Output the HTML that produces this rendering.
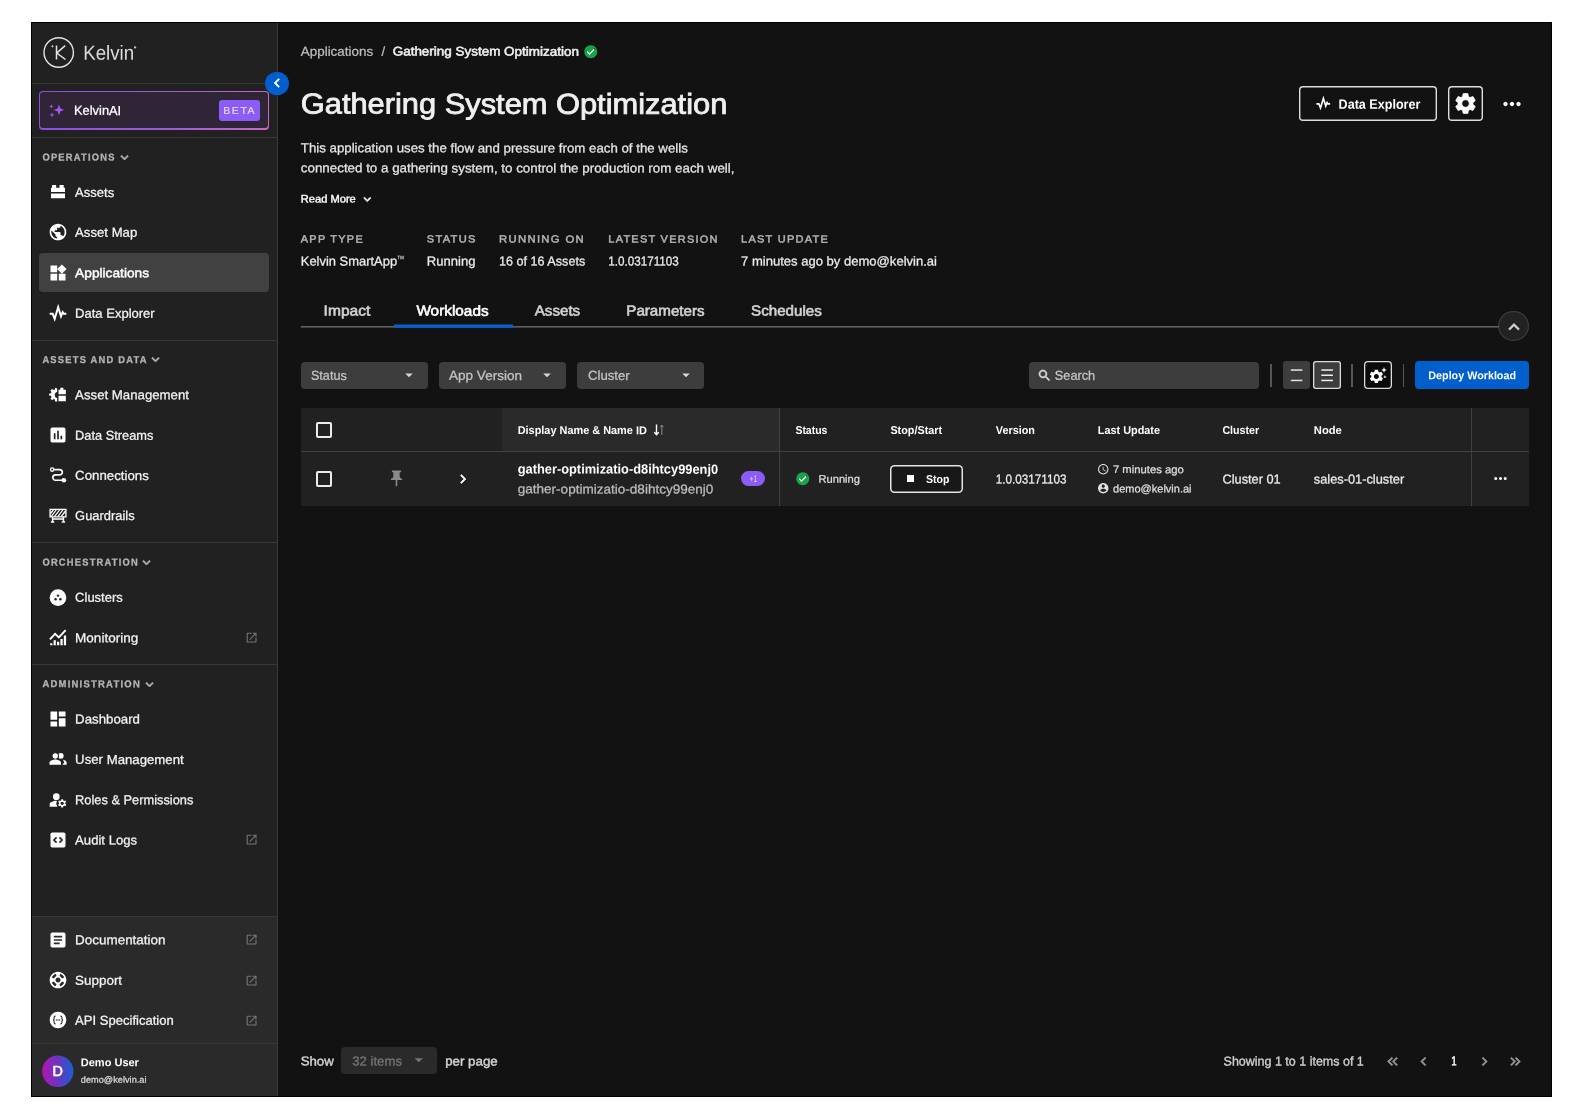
<!DOCTYPE html><html><head><meta charset="utf-8"><title>Kelvin</title><style>
html,body{margin:0;padding:0;background:#fff;width:1584px;height:1120px;overflow:hidden}
body{font-family:"Liberation Sans", sans-serif;position:relative}
#app{position:absolute;left:0;top:0;width:1584px;height:1120px;will-change:transform}
#app div,#app svg,#app span{position:absolute;display:block}
#app span{white-space:nowrap;line-height:1;transform-origin:0 50%}
</style></head><body><div id="app">
<div style="left:31px;top:22px;width:1521px;height:1075px;background:#000;"></div>
<div style="left:32px;top:23px;width:1519px;height:1073px;background:#121212;"></div>
<div style="left:32px;top:23px;width:246px;height:1073px;background:#212121;"></div>
<div style="left:32px;top:916px;width:246px;height:180px;background:#2a2a2a;"></div>
<div style="left:32px;top:82.5px;width:245px;height:1px;background:#383838;"></div>
<div style="left:32px;top:137px;width:245px;height:1px;background:#383838;"></div>
<div style="left:32px;top:340px;width:245px;height:1px;background:#383838;"></div>
<div style="left:32px;top:542px;width:245px;height:1px;background:#383838;"></div>
<div style="left:32px;top:664px;width:245px;height:1px;background:#383838;"></div>
<div style="left:32px;top:916px;width:245px;height:1px;background:#383838;"></div>
<div style="left:32px;top:1043px;width:245px;height:1px;background:#383838;"></div>
<div style="left:277px;top:23px;width:1px;height:1073px;background:#393939;"></div>
<div style="left:265.2px;top:71.6px;width:23.4px;height:23.4px;background:#005fcc;border-radius:50%"></div>
<div style="left:38.6px;top:90.9px;width:230.6px;height:38.9px;background:linear-gradient(90deg,#8b4fe0,#a25bd6 60%,#c86bc0);border-radius:4px"></div>
<div style="left:40.0px;top:92.3px;width:227.8px;height:36.1px;background:#2f2536;border-radius:3px"></div>
<div style="left:219.2px;top:100px;width:40.6px;height:20.8px;background:#8b5cf6;border-radius:3px"></div>
<div style="left:38.6px;top:253.3px;width:230.6px;height:38.3px;background:#414141;border-radius:4px"></div>
<div style="left:586.5px;top:47.8px;width:8px;height:8px;background:#fff;border-radius:50%"></div>
<div style="left:1498.4px;top:311.3px;width:30.2px;height:30.2px;background:#222;border-radius:50%;box-shadow:inset 0 0 0 1.200px #3a3a3a"></div>
<div style="left:1299.4px;top:86px;width:137.5px;height:35px;background:#121212;border-radius:4px;box-shadow:inset 0 0 0 1.400px #dedede"></div>
<div style="left:1448.3px;top:86px;width:34.7px;height:35px;background:#121212;border-radius:4px;box-shadow:inset 0 0 0 1.400px #dedede"></div>
<div style="left:300.8px;top:362px;width:126.9px;height:26.8px;background:#3d3d3d;border-radius:4px"></div>
<div style="left:439.1px;top:362px;width:126.9px;height:26.8px;background:#3d3d3d;border-radius:4px"></div>
<div style="left:577px;top:362px;width:126.9px;height:26.8px;background:#3d3d3d;border-radius:4px"></div>
<div style="left:1028.6px;top:362px;width:230.4px;height:26.8px;background:#3d3d3d;border-radius:4px"></div>
<div style="left:1270.3px;top:363.6px;width:1.6px;height:23.2px;background:#565656;"></div>
<div style="left:1351.2px;top:363.6px;width:1.6px;height:23.2px;background:#565656;"></div>
<div style="left:1402.9px;top:363.6px;width:1.6px;height:23.2px;background:#565656;"></div>
<div style="left:1283px;top:361.4px;width:27.2px;height:27.4px;background:#3d3d3d;border-radius:3px"></div>
<div style="left:1313.3px;top:361.4px;width:27.6px;height:27.4px;background:#3d3d3d;border-radius:3px;box-shadow:inset 0 0 0 1.300px #dcdcdc"></div>
<div style="left:1364.3px;top:361.4px;width:27.6px;height:27.4px;background:#0a0a0a;border-radius:4px;box-shadow:inset 0 0 0 1.300px #dcdcdc"></div>
<div style="left:1415.3px;top:361.4px;width:113.9px;height:27.4px;background:#005fcc;border-radius:4px"></div>
<div style="left:300.8px;top:407.7px;width:1228.4px;height:98.2px;background:#212121;"></div>
<div style="left:502px;top:408px;width:277.5px;height:43px;background:#2a2a2a;"></div>
<div style="left:300.8px;top:451px;width:1228.4px;height:1px;background:#414141;"></div>
<div style="left:779px;top:407.7px;width:1.2px;height:98.2px;background:#404040;"></div>
<div style="left:1471px;top:407.7px;width:1.2px;height:98.2px;background:#404040;"></div>
<div style="left:315.7px;top:421.9px;width:16.2px;height:16.2px;background:transparent;border-radius:2px;box-shadow:inset 0 0 0 2px #ececec"></div>
<div style="left:315.7px;top:470.79999999999995px;width:16.2px;height:16.2px;background:transparent;border-radius:2px;box-shadow:inset 0 0 0 2px #ececec"></div>
<div style="left:741.4px;top:471.0px;width:23.4px;height:15.2px;background:#8b5cf6;border-radius:8px"></div>
<div style="left:799px;top:475px;width:8px;height:8px;background:#fff;border-radius:50%"></div>
<div style="left:890.3px;top:464.9px;width:72.3px;height:28px;background:#181818;border-radius:4.500px;box-shadow:inset 0 0 0 1.500px #e4e4e4"></div>
<div style="left:907.2px;top:475.4px;width:7px;height:7px;background:#fff;"></div>
<div style="left:341.1px;top:1047px;width:96px;height:26.8px;background:#2a2a2a;border-radius:4px"></div>
<svg style="left:42px;top:36px" width="34" height="34" viewBox="0 0 34 34" fill="none" stroke="#e4e4e4"><circle cx="16.7" cy="16.5" r="14.7" stroke-width="1.4"/><path d="M14.5 9.4v14.100M23.200 9.600l-8.400 7.400 8.700 6.500" stroke-width="1.500"/><circle cx="10.5" cy="10.300" r=".600" stroke-width="1" fill="#e4e4e4"/></svg>
<svg style="left:132px;top:44px" width="6" height="6" viewBox="0 0 6 6"><circle cx="3.1" cy="3.400" r="1.150" fill="#c4c4c4"/></svg>
<svg style="left:267.6px;top:74.3px;" width="18" height="18" viewBox="0 0 24 24" fill="#fff"><path d="M15.41 7.41L14 6l-6 6 6 6 1.41-1.41L10.83 12z" stroke="#fff" stroke-width=".8"/></svg>
<svg style="left:48px;top:103px" width="18" height="15" viewBox="0 0 18 15" fill="#a855f7"><path d="M11 1.6l1.4 3.9 3.9 1.4-3.9 1.4L11 12.2 9.6 8.3 5.7 6.9l3.9-1.4z"/><path d="M3.4 1.2l.6 1.6 1.6.6-1.6.6-.6 1.6-.6-1.6-1.6-.6 1.6-.6z"/><path d="M4 9.4l.7 1.8 1.8.7-1.8.7L4 14.4l-.7-1.8-1.8-.7 1.8-.7z"/></svg>
<svg style="left:116.9px;top:149.8px;" width="15" height="15" viewBox="0 0 24 24" fill="#b4b4b4"><path d="M16.59 8.59L12 13.17 7.41 8.59 6 10l6 6 6-6z" stroke="#b4b4b4" stroke-width="1.2"/></svg>
<svg style="left:148.0px;top:352.3px;" width="15" height="15" viewBox="0 0 24 24" fill="#b4b4b4"><path d="M16.59 8.59L12 13.17 7.41 8.59 6 10l6 6 6-6z" stroke="#b4b4b4" stroke-width="1.2"/></svg>
<svg style="left:139.3px;top:554.8px;" width="15" height="15" viewBox="0 0 24 24" fill="#b4b4b4"><path d="M16.59 8.59L12 13.17 7.41 8.59 6 10l6 6 6-6z" stroke="#b4b4b4" stroke-width="1.2"/></svg>
<svg style="left:141.5px;top:676.5px;" width="15" height="15" viewBox="0 0 24 24" fill="#b4b4b4"><path d="M16.59 8.59L12 13.17 7.41 8.59 6 10l6 6 6-6z" stroke="#b4b4b4" stroke-width="1.2"/></svg>
<svg style="left:48px;top:182.4px;" width="20" height="20" viewBox="0 0 24 24" fill="#fff"><path d="M3.6 6.900h1.300V3.600h4.900v3.300h4V3.600h5v3.300h1.600v5.200H3.600zM3.600 13.800h16.800v5.800H3.600z" /></svg>
<svg style="left:48px;top:222.2px;" width="20" height="20" viewBox="0 0 24 24" fill="#fff"><path d="M12 2C6.48 2 2 6.48 2 12s4.48 10 10 10 10-4.48 10-10S17.52 2 12 2zm-1 17.93c-3.95-.49-7-3.85-7-7.93 0-.62.08-1.21.21-1.79L9 15v1c0 1.1.9 2 2 2v1.93zm6.9-2.54c-.26-.81-1-1.39-1.9-1.39h-1v-3c0-.55-.45-1-1-1H8v-2h2c.55 0 1-.45 1-1V7h2c1.1 0 2-.9 2-2v-.41c2.93 1.19 5 4.06 5 7.41 0 2.08-.8 3.97-2.1 5.39z" /></svg>
<svg style="left:48px;top:262.8px;" width="20" height="20" viewBox="0 0 24 24" fill="#fff"><path d="M13 13v8h8v-8h-8zM3 21h8v-8H3v8zM3 3v8h8V3H3zm13.66-1.31L11 7.34 16.66 13l5.66-5.66-5.66-5.65z" /></svg>
<svg style="left:48px;top:303.2px;" width="20" height="20" viewBox="0 0 24 24" fill="#fff"><path d="M2 12.800h3.600l2.400 6.200 4.200-14 3.400 11 2-5 1.200 1.800H22" fill="none" stroke="#fff" stroke-width="2.400" stroke-linejoin="miter"/></svg>
<svg style="left:48px;top:384.8px;" width="20" height="20" viewBox="0 0 24 24" fill="#fff"><path d="M12.6 5.6h2.2V3.4h3.6v2.2h3V11h-8.8zM12.6 13h8.8v6.4h-8.8z"/><path d="M11 4.2v4.1c-1.6 0-2.9 1.6-2.9 3.7s1.3 3.7 2.9 3.7v4.1H8.6l-.5-2.3-1.3-.6-2 1.3-1.9-1.9 1.3-2-.6-1.3-2.300-.5V10.500l2.300-.5.600-1.300-1.300-2L4.800 4.800l2 1.300 1.300-.600.500-2.300z"/></svg>
<svg style="left:48px;top:425.2px;" width="20" height="20" viewBox="0 0 24 24" fill="#fff"><path d="M19 3H5c-1.1 0-2 .9-2 2v14c0 1.1.9 2 2 2h14c1.1 0 2-.9 2-2V5c0-1.1-.9-2-2-2zM9 17H7v-7h2v7zm4 0h-2V7h2v10zm4 0h-2v-4h2v4z" /></svg>
<svg style="left:48px;top:465.4px;" width="20" height="20" viewBox="0 0 24 24" fill="#fff"><circle cx="5" cy="5.500" r="2" fill="none" stroke="#fff" stroke-width="1.600"/><path d="M7.500 5.500h6.500a3.200 3.200 0 0 1 0 6.400H9a3.200 3.200 0 0 0 0 6.400h8" fill="none" stroke="#fff" stroke-width="2"/><circle cx="19" cy="18.300" r="2.800"/></svg>
<svg style="left:48px;top:505.6px;" width="20" height="20" viewBox="0 0 24 24" fill="#fff"><path d="M2.500 4h19v9h-19z" fill="none" stroke="#fff" stroke-width="1.600"/><path d="M4 12.500l6-8M8 12.500l6-8M12 12.500l6-8M16 12.500l5-6.500M3 9l3.500-4.500" stroke="#fff" stroke-width="1.500" fill="none"/><path d="M5.500 13v6M18.500 13v6M3.500 19.200h4M16.500 19.200h4M5.500 15.500h13" stroke="#fff" stroke-width="1.800" fill="none"/></svg>
<svg style="left:48px;top:587.3px;" width="20" height="20" viewBox="0 0 24 24" fill="#fff"><circle cx="12" cy="12.700" r="10"/><circle cx="12" cy="10.300" r="1.450" fill="#212121"/><circle cx="9.100" cy="14.700" r="1.450" fill="#212121"/><circle cx="14.900" cy="14.700" r="1.450" fill="#212121"/></svg>
<svg style="left:48px;top:627.7px;" width="20" height="20" viewBox="0 0 24 24" fill="#fff"><path d="M2.300 13.600l6.200-6.600 4.500 4.200 8.200-8.600" fill="none" stroke="#fff" stroke-width="2.300"/><path d="M2.600 18.200h2.700v2.600H2.600zM6.700 14.800h2.700v6H6.700zM10.800 16.600h2.700v4.200h-2.700zM14.900 13.200h2.700v7.600h-2.700zM19 9h2.700v11.800H19z"/></svg>
<svg style="left:245px;top:631.1px;" width="13.2" height="13.2" viewBox="0 0 24 24" fill="#767676"><path d="M19 19H5V5h7V3H5c-1.11 0-2 .9-2 2v14c0 1.1.89 2 2 2h14c1.1 0 2-.9 2-2v-7h-2v7zM14 3v2h3.59l-9.83 9.83 1.41 1.41L19 6.41V10h2V3h-7z" /></svg>
<svg style="left:48px;top:709.1px;" width="20" height="20" viewBox="0 0 24 24" fill="#fff"><path d="M3 13h8V3H3v10zm0 8h8v-6H3v6zm10 0h8V11h-8v10zm0-18v6h8V3h-8z" /></svg>
<svg style="left:48px;top:749.4px;" width="20" height="20" viewBox="0 0 24 24" fill="#fff"><circle cx="15.300" cy="8.200" r="3.500"/><path d="M17.300 18.800h5.100v-2.300c0-2.100-2.700-3.400-5.200-3.800 1.300.900 2 2.200 2 3.800z"/><circle cx="8.700" cy="8.400" r="3.900" stroke="#212121" stroke-width="1.300"/><path d="M1.800 18.800v-2.300c0-2.600 4.600-3.900 6.900-3.900s6.900 1.300 6.900 3.900v2.300z"/></svg>
<svg style="left:48px;top:789.7px;" width="20" height="20" viewBox="0 0 24 24" fill="#fff"><circle cx="10" cy="8" r="4"/><path d="M10.670 13.020C10.450 13.010 10.230 13 10 13c-2.420 0-4.680.670-6.610 1.820C2.510 15.340 2 16.320 2 17.350V20h9.260a6.963 6.963 0 0 1-.590-6.980z"/><path d="M20.750 16c0-.220-.030-.420-.060-.630l1.140-1.010-1-1.730-1.450.490c-.320-.270-.680-.480-1.080-.630L18 11h-2l-.300 1.490c-.400.150-.760.360-1.080.630l-1.450-.490-1 1.730 1.140 1.010c-.030.210-.060.410-.060.630s.030.420.060.630l-1.140 1.010 1 1.730 1.450-.490c.320.270.680.480 1.080.630L16 21h2l.300-1.490c.400-.150.760-.360 1.080-.630l1.450.490 1-1.730-1.140-1.010c.030-.210.060-.410.060-.630zM17 18c-1.100 0-2-.900-2-2s.900-2 2-2 2 .900 2 2-.900 2-2 2z"/></svg>
<svg style="left:48px;top:830px;" width="20" height="20" viewBox="0 0 24 24" fill="#fff"><path d="M5 3h14a2 2 0 0 1 2 2v14a2 2 0 0 1-2 2H5a2 2 0 0 1-2-2V5a2 2 0 0 1 2-2z"/><path d="M10.300 8.800L7.100 12l3.200 3.200M13.700 8.800l3.200 3.200-3.200 3.200" fill="none" stroke="#212121" stroke-width="1.900"/></svg>
<svg style="left:245px;top:833.4px;" width="13.2" height="13.2" viewBox="0 0 24 24" fill="#767676"><path d="M19 19H5V5h7V3H5c-1.11 0-2 .9-2 2v14c0 1.1.89 2 2 2h14c1.1 0 2-.9 2-2v-7h-2v7zM14 3v2h3.59l-9.83 9.83 1.41 1.41L19 6.41V10h2V3h-7z" /></svg>
<svg style="left:48px;top:929.8px;" width="20" height="20" viewBox="0 0 24 24" fill="#fff"><path d="M19 3H5c-1.100 0-2 .900-2 2v14c0 1.100.900 2 2 2h14c1.100 0 2-.900 2-2V5c0-1.100-.900-2-2-2zm-5 14H7v-2h7v2zm3-4H7v-2h10v2zm0-4H7V7h10v2z" /></svg>
<svg style="left:245px;top:933.1999999999999px;" width="13.2" height="13.2" viewBox="0 0 24 24" fill="#767676"><path d="M19 19H5V5h7V3H5c-1.11 0-2 .9-2 2v14c0 1.1.89 2 2 2h14c1.1 0 2-.9 2-2v-7h-2v7zM14 3v2h3.59l-9.83 9.83 1.41 1.41L19 6.41V10h2V3h-7z" /></svg>
<svg style="left:48px;top:970.3px;" width="20" height="20" viewBox="0 0 24 24" fill="#fff"><path d="M12 2C6.480 2 2 6.480 2 12s4.480 10 10 10 10-4.480 10-10S17.520 2 12 2zm7.460 7.120l-2.780 1.150c-.510-1.360-1.580-2.440-2.950-2.940l1.150-2.780c2.100.800 3.770 2.470 4.580 4.570zM12 15c-1.660 0-3-1.340-3-3s1.340-3 3-3 3 1.340 3 3-1.340 3-3 3zM9.130 4.540l1.170 2.780c-1.380.500-2.470 1.590-2.980 2.970L4.540 9.130c.810-2.110 2.480-3.780 4.590-4.590zM4.540 14.870l2.780-1.150c.510 1.380 1.590 2.460 2.970 2.960l-1.170 2.780c-2.100-.810-3.770-2.480-4.580-4.590zm10.340 4.590l-1.150-2.780c1.370-.510 2.450-1.590 2.950-2.970l2.780 1.170c-.810 2.100-2.480 3.770-4.580 4.580z" /></svg>
<svg style="left:245px;top:973.6999999999999px;" width="13.2" height="13.2" viewBox="0 0 24 24" fill="#767676"><path d="M19 19H5V5h7V3H5c-1.11 0-2 .9-2 2v14c0 1.1.89 2 2 2h14c1.1 0 2-.9 2-2v-7h-2v7zM14 3v2h3.59l-9.83 9.83 1.41 1.41L19 6.41V10h2V3h-7z" /></svg>
<svg style="left:48px;top:1010.2px;" width="20" height="20" viewBox="0 0 24 24" fill="#fff"><circle cx="12" cy="12" r="10"/><path d="M9.300 7.200c-1.600 0-2 .700-2 1.800v1.400c0 .900-.500 1.400-1.300 1.600.800.200 1.300.700 1.300 1.600V15c0 1.100.400 1.800 2 1.800M14.700 7.200c1.600 0 2 .700 2 1.800v1.400c0 .900.500 1.400 1.300 1.600-.800.200-1.300.700-1.300 1.600V15c0 1.100-.400 1.800-2 1.800" fill="none" stroke="#2a2a2a" stroke-width="1.300"/><circle cx="10" cy="12" r=".800" fill="#2a2a2a"/><circle cx="12" cy="12" r=".800" fill="#2a2a2a"/><circle cx="14" cy="12" r=".800" fill="#2a2a2a"/></svg>
<svg style="left:245px;top:1013.6px;" width="13.2" height="13.2" viewBox="0 0 24 24" fill="#767676"><path d="M19 19H5V5h7V3H5c-1.11 0-2 .9-2 2v14c0 1.1.89 2 2 2h14c1.1 0 2-.9 2-2v-7h-2v7zM14 3v2h3.59l-9.83 9.83 1.41 1.41L19 6.41V10h2V3h-7z" /></svg>
<svg style="left:41px;top:1054px" width="34" height="34" viewBox="0 0 34 34"><defs><linearGradient id="ag" x1="0" x2="1" y1="0" y2="0"><stop offset="0" stop-color="#b414b0"/><stop offset=".5" stop-color="#6a35c0"/><stop offset="1" stop-color="#1a5fd0"/></linearGradient></defs><circle cx="16.8" cy="17.300" r="15.700" fill="url(#ag)"/></svg>
<svg style="left:583.1px;top:44.0px;" width="15.6" height="15.6" viewBox="0 0 24 24" fill="#17a34a"><path d="M12 2C6.48 2 2 6.48 2 12s4.48 10 10 10 10-4.48 10-10S17.52 2 12 2zm-2 15l-5-5 1.41-1.41L10 14.17l7.59-7.59L19 8l-9 9z" /></svg>
<svg style="left:359.8px;top:191.6px;" width="14.6" height="14.6" viewBox="0 0 24 24" fill="#fff"><path d="M16.59 8.59L12 13.17 7.41 8.59 6 10l6 6 6-6z" stroke="#fff" stroke-width="1"/></svg>
<svg style="left:300px;top:324px" width="1200" height="5" viewBox="0 0 1200 5"><rect x=".800" y="2.000" width="1198" height="1.600" fill="#606060"/><rect x="94" y=".500" width="119" height="3.300" fill="#0560cf"/></svg>
<svg style="left:1502.5px;top:315.7px;" width="22" height="22" viewBox="0 0 24 24" fill="#d0d0d0"><path d="M12 8l-6 6 1.41 1.41L12 10.83l4.59 4.58L18 14z" stroke="#d0d0d0" stroke-width=".500"/></svg>
<svg style="left:1315.200px;top:94.800px" width="16.500" height="16.500" viewBox="0 0 24 24" fill="none" stroke="#fff" stroke-width="2.400"><path d="M2 12.800h3.600l2.400 6.200 4.200-14 3.400 11 2-5 1.200 1.800H22"/></svg>
<svg style="left:1453.2px;top:91px;" width="25" height="25" viewBox="0 0 24 24" fill="#fff"><path d="M19.14 12.94c.04-.3.06-.61.06-.94 0-.32-.02-.64-.07-.94l2.03-1.58c.18-.14.23-.41.12-.61l-1.92-3.32c-.12-.22-.37-.29-.59-.22l-2.39.96c-.5-.38-1.03-.7-1.62-.94l-.36-2.54c-.04-.24-.24-.41-.48-.41h-3.84c-.24 0-.43.17-.47.41l-.36 2.54c-.59.24-1.13.57-1.62.94l-2.39-.96c-.22-.08-.47 0-.59.22L2.74 8.87c-.12.21-.08.47.12.61l2.03 1.58c-.05.3-.09.63-.09.94s.02.64.07.94l-2.03 1.58c-.18.14-.23.41-.12.61l1.92 3.32c.12.22.37.29.59.22l2.39-.96c.5.38 1.03.7 1.62.94l.36 2.54c.05.24.24.41.48.41h3.84c.24 0 .44-.17.47-.41l.36-2.54c.59-.24 1.13-.56 1.62-.94l2.39.96c.22.08.47 0 .59-.22l1.92-3.32c.12-.22.07-.47-.12-.61l-2.01-1.58zM12 15.6c-1.98 0-3.6-1.62-3.6-3.6s1.620-3.600 3.600-3.600 3.600 1.620 3.600 3.600-1.620 3.600-3.600 3.600z" stroke="#fff" stroke-width=".700"/></svg>
<svg style="left:1498.6px;top:90.8px;" width="26" height="26" viewBox="0 0 24 24" fill="#fff"><path d="M6 10c-1.1 0-2 .9-2 2s.9 2 2 2 2-.9 2-2-.9-2-2-2zm12 0c-1.1 0-2 .9-2 2s.9 2 2 2 2-.9 2-2-.9-2-2-2zm-6 0c-1.1 0-2 .9-2 2s.9 2 2 2 2-.9 2-2-.9-2-2-2z" /></svg>
<svg style="left:400.1px;top:366.2px;" width="18" height="18" viewBox="0 0 24 24" fill="#d8d8d8"><path d="M7 10l5 5 5-5z" /></svg>
<svg style="left:538.4px;top:366.2px;" width="18" height="18" viewBox="0 0 24 24" fill="#d8d8d8"><path d="M7 10l5 5 5-5z" /></svg>
<svg style="left:677px;top:366.2px;" width="18" height="18" viewBox="0 0 24 24" fill="#d8d8d8"><path d="M7 10l5 5 5-5z" /></svg>
<svg style="left:1037.2px;top:367.7px;" width="15" height="15" viewBox="0 0 24 24" fill="#dcdcdc"><path d="M15.5 14h-.79l-.28-.27C15.41 12.59 16 11.11 16 9.5 16 5.91 13.09 3 9.5 3S3 5.91 3 9.5 5.91 16 9.5 16c1.61 0 3.09-.59 4.23-1.57l.27.28v.79l5 4.990L20.490 19l-4.990-5zm-6 0C7.010 14 5 11.990 5 9.500S7.010 5 9.500 5 14 7.010 14 9.500 11.990 14 9.500 14z" stroke="#dcdcdc" stroke-width=".800"/></svg>
<svg style="left:1283px;top:361px" width="28" height="28" viewBox="0 0 28 28" fill="#e4e4e4"><rect x="7.800" y="8.300" width="11.600" height="1.500"/><rect x="7.800" y="18.700" width="11.600" height="1.500"/></svg>
<svg style="left:1313px;top:361px" width="28" height="28" viewBox="0 0 28 28" fill="#f0f0f0"><rect x="8.300" y="8.300" width="11.600" height="1.500"/><rect x="8.300" y="13.500" width="11.600" height="1.500"/><rect x="8.300" y="18.700" width="11.600" height="1.500"/></svg>
<svg style="left:1368.3px;top:368.1px;" width="16.8" height="16.8" viewBox="0 0 24 24" fill="#fff"><path d="M19.14 12.94c.04-.3.06-.61.06-.94 0-.32-.02-.64-.07-.94l2.03-1.58c.18-.14.23-.41.12-.61l-1.92-3.32c-.12-.22-.37-.29-.59-.22l-2.39.96c-.5-.38-1.03-.7-1.62-.94l-.36-2.54c-.04-.24-.24-.41-.48-.41h-3.84c-.24 0-.43.17-.47.41l-.36 2.54c-.59.24-1.13.57-1.62.94l-2.39-.96c-.22-.08-.47 0-.59.22L2.74 8.87c-.12.21-.08.47.12.61l2.03 1.58c-.05.3-.09.63-.09.94s.02.64.07.94l-2.03 1.58c-.18.14-.23.41-.12.61l1.92 3.32c.12.22.37.29.59.22l2.39-.96c.5.38 1.03.7 1.62.94l.36 2.54c.05.24.24.41.48.41h3.84c.24 0 .44-.17.47-.41l.36-2.54c.59-.24 1.13-.56 1.62-.94l2.39.96c.22.08.47 0 .59-.22l1.92-3.32c.12-.22.07-.47-.12-.61l-2.01-1.58zM12 15.6c-1.98 0-3.6-1.62-3.6-3.6s1.620-3.600 3.600-3.600 3.600 1.620 3.600 3.600-1.620 3.600-3.600 3.600z" /></svg>
<svg style="left:1380.600px;top:367.200px" width="6" height="6" viewBox="0 0 10 10" fill="#fff"><path d="M5 0l1.300 3.700L10 5 6.300 6.300 5 10 3.700 6.300 0 5l3.700-1.300z"/></svg>
<svg style="left:1383.400px;top:374.500px" width="3.800" height="3.800" viewBox="0 0 10 10" fill="#fff"><path d="M5 0l1.300 3.700L10 5 6.300 6.300 5 10 3.700 6.300 0 5l3.700-1.300z"/></svg>
<svg style="left:652px;top:423px" width="14" height="14" viewBox="0 0 14 14" fill="none"><path d="M4.500 1.500v10M2.300 9.300l2.200 2.400 2.200-2.400" stroke="#fff" stroke-width="1.400"/><path d="M9.800 12V2.200M8 4.200l1.800-2 1.800 2" stroke="#8a8a8a" stroke-width="1"/></svg>
<svg style="left:387.3px;top:469.4px;" width="19" height="19" viewBox="0 0 24 24" fill="#8a8a8a"><path d="M16 9V4h1c.55 0 1-.45 1-1s-.45-1-1-1H7c-.55 0-1 .45-1 1s.45 1 1 1h1v5c0 1.660-1.340 3-3 3v2h5.970v7l1 1 1-1v-7H19v-2c-1.660 0-3-1.340-3-3z" /></svg>
<svg style="left:454.4px;top:469.9px;" width="18" height="18" viewBox="0 0 24 24" fill="#fff"><path d="M10 6L8.590 7.410 13.170 12l-4.580 4.590L10 18l6-6z" stroke="#fff" stroke-width=".700"/></svg>
<svg style="left:795.1px;top:471.1px;" width="15.6" height="15.6" viewBox="0 0 24 24" fill="#17a34a"><path d="M12 2C6.48 2 2 6.48 2 12s4.48 10 10 10 10-4.48 10-10S17.52 2 12 2zm-2 15l-5-5 1.41-1.41L10 14.17l7.59-7.59L19 8l-9 9z" /></svg>
<svg style="left:1097.15px;top:463.35px;" width="12.5" height="12.5" viewBox="0 0 24 24" fill="#e0e0e0"><path d="M11.99 2C6.47 2 2 6.48 2 12s4.47 10 9.990 10C17.520 22 22 17.520 22 12S17.520 2 11.990 2zM12 20c-4.420 0-8-3.580-8-8s3.580-8 8-8 8 3.580 8 8-3.580 8-8 8zm.500-13H11v6l5.250 3.150.750-1.230-4.500-2.670z" /></svg>
<svg style="left:1097.15px;top:482.45px;" width="12.5" height="12.5" viewBox="0 0 24 24" fill="#e0e0e0"><path d="M12 2C6.480 2 2 6.480 2 12s4.480 10 10 10 10-4.480 10-10S17.520 2 12 2zm0 3c1.660 0 3 1.340 3 3s-1.340 3-3 3-3-1.340-3-3 1.340-3 3-3zm0 14.200c-2.500 0-4.710-1.280-6-3.220.030-1.990 4-3.080 6-3.080 1.990 0 5.970 1.090 6 3.080-1.290 1.940-3.500 3.220-6 3.220z" /></svg>
<svg style="left:1490.6px;top:469.4px;" width="19" height="19" viewBox="0 0 24 24" fill="#fff"><path d="M6 10c-1.1 0-2 .9-2 2s.9 2 2 2 2-.9 2-2-.9-2-2-2zm12 0c-1.1 0-2 .9-2 2s.9 2 2 2 2-.9 2-2-.9-2-2-2zm-6 0c-1.1 0-2 .9-2 2s.9 2 2 2 2-.9 2-2-.9-2-2-2z" /></svg>
<svg style="left:409.4px;top:1050.0px;" width="19.5" height="19.5" viewBox="0 0 24 24" fill="#777"><path d="M7 10l5 5 5-5z" /></svg>
<svg style="left:1384.3px;top:1052.5px;" width="17" height="17" viewBox="0 0 24 24" fill="#959595"><path d="M17.590 18L19 16.590 14.420 12 19 7.410 17.590 6l-6 6zM11 18l1.410-1.410L7.830 12l4.580-4.590L11 6l-6 6z" stroke="#959595" stroke-width=".900"/></svg>
<svg style="left:1414.6px;top:1052.5px;" width="17" height="17" viewBox="0 0 24 24" fill="#959595"><path d="M15.410 7.410L14 6l-6 6 6 6 1.410-1.410L10.830 12z" stroke="#959595" stroke-width=".900"/></svg>
<svg style="left:1476px;top:1052.5px;" width="17" height="17" viewBox="0 0 24 24" fill="#959595"><path d="M10 6L8.590 7.410 13.170 12l-4.580 4.590L10 18l6-6z" stroke="#959595" stroke-width=".900"/></svg>
<svg style="left:1506.8px;top:1052.5px;" width="17" height="17" viewBox="0 0 24 24" fill="#959595"><path d="M6.410 6L5 7.410 9.580 12 5 16.590 6.410 18l6-6zM13 6l-1.410 1.410L16.170 12l-4.580 4.590L13 18l6-6z" stroke="#959595" stroke-width=".900"/></svg>
<span style="left:83px;top:42px;font-size:20.5px;font-weight:400;color:#dcdcdc;transform:translate(0.20px,0.70px) scaleX(0.9115) rotate(0.05deg);-webkit-text-stroke:0px;">Kelvin</span>
<span style="left:74px;top:104px;font-size:12.93px;font-weight:400;color:#fff;transform:translate(0.00px,0.85px) scaleX(0.9956) rotate(0.05deg);-webkit-text-stroke:0.26px #fff;">KelvinAI</span>
<span style="left:223px;top:105px;font-size:10.11px;font-weight:400;color:#e4d8ff;letter-spacing:1.5px;transform:translate(0.30px,0.98px) scaleX(1.0390) rotate(0.05deg);-webkit-text-stroke:0.20px #e4d8ff;">BETA</span>
<span style="left:42px;top:152px;font-size:9.9px;font-weight:700;color:#b4b4b4;letter-spacing:1.3px;transform:translate(0.40px,0.41px) scaleX(0.9441) rotate(0.05deg);-webkit-text-stroke:0.3px #b4b4b4;">OPERATIONS</span>
<span style="left:42px;top:354px;font-size:9.9px;font-weight:700;color:#b4b4b4;letter-spacing:1.3px;transform:translate(0.40px,0.91px) scaleX(0.9457) rotate(0.05deg);-webkit-text-stroke:0.3px #b4b4b4;">ASSETS AND DATA</span>
<span style="left:42px;top:557px;font-size:9.9px;font-weight:700;color:#b4b4b4;letter-spacing:1.3px;transform:translate(0.40px,0.41px) scaleX(0.9444) rotate(0.05deg);-webkit-text-stroke:0.3px #b4b4b4;">ORCHESTRATION</span>
<span style="left:42px;top:679px;font-size:9.9px;font-weight:700;color:#b4b4b4;letter-spacing:1.3px;transform:translate(0.40px,0.11px) scaleX(0.9573) rotate(0.05deg);-webkit-text-stroke:0.3px #b4b4b4;">ADMINISTRATION</span>
<span style="left:75px;top:186px;font-size:12.93px;font-weight:400;color:#f4f4f4;transform:translate(0.10px,0.85px) scaleX(1.0082) rotate(0.05deg);-webkit-text-stroke:0.26px #f4f4f4;">Assets</span>
<span style="left:75px;top:226px;font-size:12.93px;font-weight:400;color:#f4f4f4;transform:translate(0.10px,0.65px) scaleX(1.0173) rotate(0.05deg);-webkit-text-stroke:0.26px #f4f4f4;">Asset Map</span>
<span style="left:75px;top:267px;font-size:12.7px;font-weight:400;color:#fff;transform:translate(0.10px,0.17px) scaleX(1.0815) rotate(0.05deg);-webkit-text-stroke:0.45px #fff;">Applications</span>
<span style="left:75px;top:307px;font-size:12.93px;font-weight:400;color:#f4f4f4;transform:translate(0.10px,0.65px) scaleX(1.0074) rotate(0.05deg);-webkit-text-stroke:0.26px #f4f4f4;">Data Explorer</span>
<span style="left:75px;top:389px;font-size:12.93px;font-weight:400;color:#f4f4f4;transform:translate(0.10px,0.25px) scaleX(1.0230) rotate(0.05deg);-webkit-text-stroke:0.26px #f4f4f4;">Asset Management</span>
<span style="left:75px;top:429px;font-size:12.93px;font-weight:400;color:#f4f4f4;transform:translate(0.10px,0.65px) scaleX(0.9899) rotate(0.05deg);-webkit-text-stroke:0.26px #f4f4f4;">Data Streams</span>
<span style="left:75px;top:469px;font-size:12.93px;font-weight:400;color:#f4f4f4;transform:translate(0.10px,0.85px) scaleX(1.0258) rotate(0.05deg);-webkit-text-stroke:0.26px #f4f4f4;">Connections</span>
<span style="left:75px;top:510px;font-size:12.93px;font-weight:400;color:#f4f4f4;transform:translate(0.10px,0.05px) scaleX(0.9982) rotate(0.05deg);-webkit-text-stroke:0.26px #f4f4f4;">Guardrails</span>
<span style="left:75px;top:591px;font-size:12.93px;font-weight:400;color:#f4f4f4;transform:translate(0.10px,0.75px) scaleX(1.0062) rotate(0.05deg);-webkit-text-stroke:0.26px #f4f4f4;">Clusters</span>
<span style="left:75px;top:632px;font-size:12.93px;font-weight:400;color:#f4f4f4;transform:translate(0.10px,0.15px) scaleX(1.0457) rotate(0.05deg);-webkit-text-stroke:0.26px #f4f4f4;">Monitoring</span>
<span style="left:75px;top:713px;font-size:12.93px;font-weight:400;color:#f4f4f4;transform:translate(0.10px,0.55px) scaleX(1.0266) rotate(0.05deg);-webkit-text-stroke:0.26px #f4f4f4;">Dashboard</span>
<span style="left:75px;top:753px;font-size:12.93px;font-weight:400;color:#f4f4f4;transform:translate(0.10px,0.85px) scaleX(1.0217) rotate(0.05deg);-webkit-text-stroke:0.26px #f4f4f4;">User Management</span>
<span style="left:75px;top:794px;font-size:12.93px;font-weight:400;color:#f4f4f4;transform:translate(0.10px,0.15px) scaleX(0.9923) rotate(0.05deg);-webkit-text-stroke:0.26px #f4f4f4;">Roles &amp; Permissions</span>
<span style="left:75px;top:834px;font-size:12.93px;font-weight:400;color:#f4f4f4;transform:translate(0.10px,0.45px) scaleX(1.0151) rotate(0.05deg);-webkit-text-stroke:0.26px #f4f4f4;">Audit Logs</span>
<span style="left:75px;top:934px;font-size:12.93px;font-weight:400;color:#f4f4f4;transform:translate(0.10px,0.25px) scaleX(1.0400) rotate(0.05deg);-webkit-text-stroke:0.26px #f4f4f4;">Documentation</span>
<span style="left:75px;top:974px;font-size:12.93px;font-weight:400;color:#f4f4f4;transform:translate(0.10px,0.75px) scaleX(1.0383) rotate(0.05deg);-webkit-text-stroke:0.26px #f4f4f4;">Support</span>
<span style="left:75px;top:1014px;font-size:12.93px;font-weight:400;color:#f4f4f4;transform:translate(0.10px,0.65px) scaleX(1.0104) rotate(0.05deg);-webkit-text-stroke:0.26px #f4f4f4;">API Specification</span>
<span style="left:52px;top:1063px;font-size:14.6px;font-weight:400;color:#fff;transform:translate(0.50px,0.92px) scaleX(0.9861) rotate(0.05deg);-webkit-text-stroke:0.6px #fff;">D</span>
<span style="left:80px;top:1057px;font-size:11.4px;font-weight:700;color:#fff;transform:translate(0.80px,0.32px) scaleX(0.9661) rotate(0.05deg);">Demo User</span>
<span style="left:80px;top:1075px;font-size:9.23px;font-weight:400;color:#e0e0e0;transform:translate(0.80px,0.78px) scaleX(0.9995) rotate(0.05deg);-webkit-text-stroke:0.18px #e0e0e0;">demo@kelvin.ai</span>
<span style="left:300px;top:45px;font-size:12.93px;font-weight:400;color:#bdbdbd;transform:translate(0.80px,0.65px) scaleX(1.0375) rotate(0.05deg);-webkit-text-stroke:0.26px #bdbdbd;">Applications</span>
<span style="left:381px;top:45px;font-size:12.93px;font-weight:400;color:#bdbdbd;transform:translate(0.60px,0.65px) rotate(0.05deg);-webkit-text-stroke:0.26px #bdbdbd;">/</span>
<span style="left:392px;top:45px;font-size:12.6px;font-weight:400;color:#f0f0f0;transform:translate(0.70px,0.53px) scaleX(1.0683) rotate(0.05deg);-webkit-text-stroke:0.55px #f0f0f0;">Gathering System Optimization</span>
<span style="left:300px;top:89px;font-size:28.8px;font-weight:400;color:#f0f0f0;transform:translate(0.80px,0.51px) scaleX(1.0702) rotate(0.05deg);-webkit-text-stroke:0.8px #f0f0f0;">Gathering System Optimization</span>
<span style="left:300px;top:142px;font-size:12.93px;font-weight:400;color:#e6e6e6;transform:translate(0.80px,0.25px) scaleX(1.0263) rotate(0.05deg);-webkit-text-stroke:0.26px #e6e6e6;">This application uses the flow and pressure from each of the wells</span>
<span style="left:300px;top:162px;font-size:12.93px;font-weight:400;color:#e6e6e6;transform:translate(0.80px,0.25px) scaleX(1.0339) rotate(0.05deg);-webkit-text-stroke:0.26px #e6e6e6;">connected to a gathering system, to control the production rom each well,</span>
<span style="left:300px;top:193px;font-size:10.9px;font-weight:400;color:#fff;transform:translate(0.80px,0.55px) scaleX(1.0209) rotate(0.05deg);-webkit-text-stroke:0.4px #fff;">Read More</span>
<span style="left:300px;top:234px;font-size:10.4px;font-weight:400;color:#b4b4b4;letter-spacing:1.2px;transform:translate(0.80px,0.58px) scaleX(1.0519) rotate(0.05deg);-webkit-text-stroke:0.45px #b4b4b4;">APP TYPE</span>
<span style="left:300px;top:255px;font-size:12.93px;font-weight:400;color:#ececec;transform:translate(0.80px,0.45px) scaleX(1.0005) rotate(0.05deg);-webkit-text-stroke:0.26px #ececec;">Kelvin SmartApp</span>
<span style="left:397px;top:256px;font-size:4.86px;font-weight:400;color:#ececec;transform:translate(0.60px,0.17px) scaleX(0.8818) rotate(0.05deg);-webkit-text-stroke:0.10px #ececec;">TM</span>
<span style="left:426px;top:234px;font-size:10.4px;font-weight:400;color:#b4b4b4;letter-spacing:1.2px;transform:translate(0.80px,0.58px) scaleX(1.0692) rotate(0.05deg);-webkit-text-stroke:0.45px #b4b4b4;">STATUS</span>
<span style="left:426px;top:255px;font-size:12.93px;font-weight:400;color:#ececec;transform:translate(0.80px,0.45px) scaleX(1.0095) rotate(0.05deg);-webkit-text-stroke:0.26px #ececec;">Running</span>
<span style="left:499px;top:234px;font-size:10.4px;font-weight:400;color:#b4b4b4;letter-spacing:1.2px;transform:translate(0.00px,0.58px) scaleX(1.0891) rotate(0.05deg);-webkit-text-stroke:0.45px #b4b4b4;">RUNNING ON</span>
<span style="left:499px;top:255px;font-size:12.93px;font-weight:400;color:#ececec;transform:translate(0.00px,0.45px) scaleX(0.9756) rotate(0.05deg);-webkit-text-stroke:0.26px #ececec;">16 of 16 Assets</span>
<span style="left:608px;top:234px;font-size:10.4px;font-weight:400;color:#b4b4b4;letter-spacing:1.2px;transform:translate(0.30px,0.58px) scaleX(1.0544) rotate(0.05deg);-webkit-text-stroke:0.45px #b4b4b4;">LATEST VERSION</span>
<span style="left:608px;top:255px;font-size:12.93px;font-weight:400;color:#ececec;transform:translate(0.30px,0.45px) scaleX(0.9015) rotate(0.05deg);-webkit-text-stroke:0.26px #ececec;">1.0.03171103</span>
<span style="left:741px;top:234px;font-size:10.4px;font-weight:400;color:#b4b4b4;letter-spacing:1.2px;transform:translate(0.00px,0.58px) scaleX(1.0577) rotate(0.05deg);-webkit-text-stroke:0.45px #b4b4b4;">LAST UPDATE</span>
<span style="left:741px;top:255px;font-size:12.93px;font-weight:400;color:#ececec;transform:translate(0.00px,0.45px) scaleX(1.0097) rotate(0.05deg);-webkit-text-stroke:0.26px #ececec;">7 minutes ago by demo@kelvin.ai</span>
<span style="left:323px;top:303px;font-size:14.5px;font-weight:400;color:#d2d2d2;transform:translate(0.60px,0.59px) scaleX(1.0732) rotate(0.05deg);-webkit-text-stroke:0.6px #d2d2d2;">Impact</span>
<span style="left:416px;top:303px;font-size:14.5px;font-weight:400;color:#fff;transform:translate(0.40px,0.59px) scaleX(1.0581) rotate(0.05deg);-webkit-text-stroke:0.6px #fff;">Workloads</span>
<span style="left:534px;top:303px;font-size:14.5px;font-weight:400;color:#d2d2d2;transform:translate(0.70px,0.59px) scaleX(1.0456) rotate(0.05deg);-webkit-text-stroke:0.6px #d2d2d2;">Assets</span>
<span style="left:626px;top:303px;font-size:14.5px;font-weight:400;color:#d2d2d2;transform:translate(0.30px,0.59px) scaleX(1.0447) rotate(0.05deg);-webkit-text-stroke:0.6px #d2d2d2;">Parameters</span>
<span style="left:751px;top:303px;font-size:14.5px;font-weight:400;color:#d2d2d2;transform:translate(0.10px,0.59px) scaleX(1.0440) rotate(0.05deg);-webkit-text-stroke:0.6px #d2d2d2;">Schedules</span>
<span style="left:1338px;top:97px;font-size:13.3px;font-weight:700;color:#fff;transform:translate(0.60px,0.78px) scaleX(0.9460) rotate(0.05deg);">Data Explorer</span>
<span style="left:310px;top:369px;font-size:12.93px;font-weight:400;color:#c4c4c4;transform:translate(0.90px,0.85px) scaleX(0.9798) rotate(0.05deg);-webkit-text-stroke:0.26px #c4c4c4;">Status</span>
<span style="left:449px;top:369px;font-size:12.93px;font-weight:400;color:#c4c4c4;transform:translate(0.10px,0.85px) scaleX(1.0447) rotate(0.05deg);-webkit-text-stroke:0.26px #c4c4c4;">App Version</span>
<span style="left:588px;top:369px;font-size:12.93px;font-weight:400;color:#c4c4c4;transform:translate(0.00px,0.85px) scaleX(1.0186) rotate(0.05deg);-webkit-text-stroke:0.26px #c4c4c4;">Cluster</span>
<span style="left:1054px;top:369px;font-size:12.93px;font-weight:400;color:#c4c4c4;transform:translate(0.80px,0.85px) scaleX(0.9865) rotate(0.05deg);-webkit-text-stroke:0.26px #c4c4c4;">Search</span>
<span style="left:1428px;top:370px;font-size:11.4px;font-weight:700;color:#fff;transform:translate(0.30px,0.22px) scaleX(0.9448) rotate(0.05deg);">Deploy Workload</span>
<span style="left:517px;top:425px;font-size:11.4px;font-weight:700;color:#fff;transform:translate(0.70px,0.02px) scaleX(0.9574) rotate(0.05deg);">Display Name &amp; Name ID</span>
<span style="left:795px;top:425px;font-size:11.4px;font-weight:700;color:#fff;transform:translate(0.40px,0.02px) scaleX(0.9192) rotate(0.05deg);">Status</span>
<span style="left:890px;top:425px;font-size:11.4px;font-weight:700;color:#fff;transform:translate(0.40px,0.02px) scaleX(0.9497) rotate(0.05deg);">Stop/Start</span>
<span style="left:995px;top:425px;font-size:11.4px;font-weight:700;color:#fff;transform:translate(0.80px,0.02px) scaleX(0.9525) rotate(0.05deg);">Version</span>
<span style="left:1097px;top:425px;font-size:11.4px;font-weight:700;color:#fff;transform:translate(0.80px,0.02px) scaleX(0.9539) rotate(0.05deg);">Last Update</span>
<span style="left:1222px;top:425px;font-size:11.4px;font-weight:700;color:#fff;transform:translate(0.40px,0.02px) scaleX(0.9376) rotate(0.05deg);">Cluster</span>
<span style="left:1313px;top:425px;font-size:11.4px;font-weight:700;color:#fff;transform:translate(0.80px,0.02px) scaleX(0.9830) rotate(0.05deg);">Node</span>
<span style="left:517px;top:462px;font-size:13.3px;font-weight:700;color:#fff;transform:translate(0.70px,0.48px) scaleX(0.9652) rotate(0.05deg);">gather-optimizatio-d8ihtcy99enj0</span>
<span style="left:517px;top:483px;font-size:12.93px;font-weight:400;color:#bdbdbd;transform:translate(0.70px,0.35px) scaleX(1.0478) rotate(0.05deg);-webkit-text-stroke:0.26px #bdbdbd;">gather-optimizatio-d8ihtcy99enj0</span>
<span style="left:749px;top:473px;font-size:9.5px;font-weight:400;color:#e0d4ff;transform:translate(0.50px,0.97px) scaleX(0.7193) rotate(0.05deg);-webkit-text-stroke:0px;">+1</span>
<span style="left:818px;top:473px;font-size:11.08px;font-weight:400;color:#e0e0e0;transform:translate(0.40px,0.81px) scaleX(1.0077) rotate(0.05deg);-webkit-text-stroke:0.22px #e0e0e0;">Running</span>
<span style="left:926px;top:473px;font-size:11.4px;font-weight:700;color:#fff;transform:translate(0.00px,0.92px) scaleX(0.9244) rotate(0.05deg);">Stop</span>
<span style="left:995px;top:473px;font-size:12.93px;font-weight:400;color:#ececec;transform:translate(0.80px,0.45px) scaleX(0.9053) rotate(0.05deg);-webkit-text-stroke:0.26px #ececec;">1.0.03171103</span>
<span style="left:1112px;top:464px;font-size:11.08px;font-weight:400;color:#e0e0e0;transform:translate(0.90px,0.11px) scaleX(1.0188) rotate(0.05deg);-webkit-text-stroke:0.22px #e0e0e0;">7 minutes ago</span>
<span style="left:1113px;top:483px;font-size:11.08px;font-weight:400;color:#e0e0e0;transform:translate(0.10px,0.51px) scaleX(0.9926) rotate(0.05deg);-webkit-text-stroke:0.22px #e0e0e0;">demo@kelvin.ai</span>
<span style="left:1222px;top:473px;font-size:12.93px;font-weight:400;color:#ececec;transform:translate(0.50px,0.45px) scaleX(0.9880) rotate(0.05deg);-webkit-text-stroke:0.26px #ececec;">Cluster 01</span>
<span style="left:1313px;top:473px;font-size:12.93px;font-weight:400;color:#ececec;transform:translate(0.80px,0.45px) scaleX(0.9910) rotate(0.05deg);-webkit-text-stroke:0.26px #ececec;">sales-01-cluster</span>
<span style="left:300px;top:1055px;font-size:12.7px;font-weight:400;color:#d4d4d4;transform:translate(0.70px,0.37px) scaleX(1.0425) rotate(0.05deg);-webkit-text-stroke:0.4px #d4d4d4;">Show</span>
<span style="left:352px;top:1055px;font-size:12.93px;font-weight:400;color:#777;transform:translate(0.20px,0.45px) scaleX(1.0196) rotate(0.05deg);-webkit-text-stroke:0.26px #777;">32 items</span>
<span style="left:445px;top:1055px;font-size:12.7px;font-weight:400;color:#d4d4d4;transform:translate(0.20px,0.37px) scaleX(1.0480) rotate(0.05deg);-webkit-text-stroke:0.4px #d4d4d4;">per page</span>
<span style="left:1223px;top:1055px;font-size:12.8px;font-weight:400;color:#d0d0d0;transform:translate(0.60px,0.40px) scaleX(0.9756) rotate(0.05deg);-webkit-text-stroke:0.35px #d0d0d0;">Showing 1 to 1 items of 1</span>
<span style="left:1451px;top:1054px;font-size:13.3px;font-weight:700;color:#fff;transform:translate(0.20px,0.58px) scaleX(0.7291) rotate(0.05deg);">1</span>
</div></body></html>
